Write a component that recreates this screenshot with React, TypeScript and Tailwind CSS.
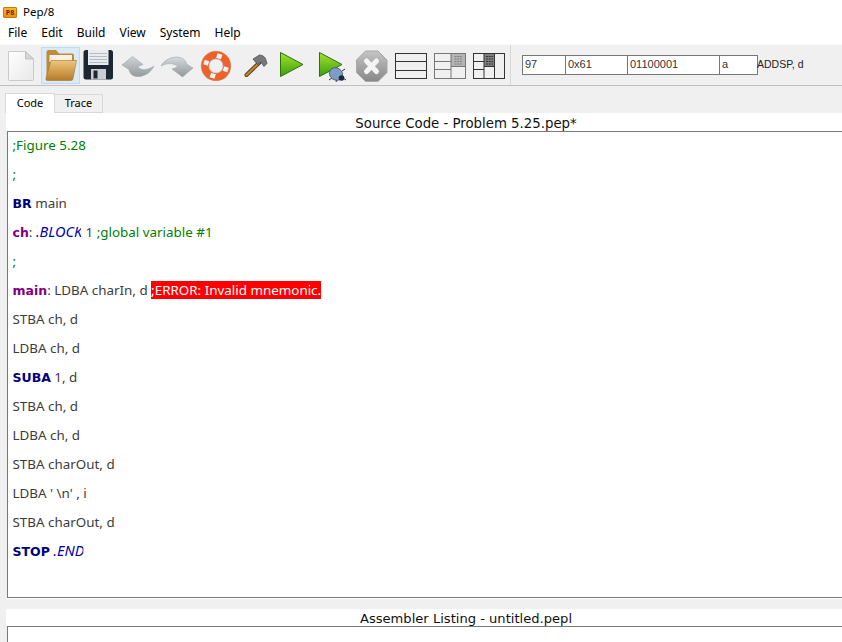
import type { ReactNode } from 'react';

const Icon = ({ children, active }: { children: ReactNode; active?: boolean }) => (
  <div className={`w-[39px] h-[37px] shrink-0 border ${active ? 'bg-[#d9ebf9] border-[#bcdcf4]' : 'border-transparent'}`}>
    <svg width="39" height="37" viewBox="0 0 39 37" className="-m-px block">
      {children}
    </svg>
  </div>
);

const NewIcon = () => (
  <Icon>
    <defs>
      <linearGradient id="newFill" x1="0" y1="0" x2="1" y2="1">
        <stop offset="0" stopColor="#ffffff" />
        <stop offset="1" stopColor="#e8e8e8" />
      </linearGradient>
    </defs>
    <path d="M6.500 4.500H23.500L31.500 12V32.500a1 1 0 0 1-1 1H7.500a1 1 0 0 1-1-1Z" fill="url(#newFill)" stroke="#cacaca" />
    <path d="M23.500 4.500V12H31.500Z" fill="#d6d6d6" stroke="#c2c2c2" />
  </Icon>
);

const OpenIcon = () => (
  <Icon active>
    <defs>
      <linearGradient id="folderFront" x1="0" y1="0" x2="0" y2="1">
        <stop offset="0" stopColor="#f0c67c" />
        <stop offset="1" stopColor="#b67a28" />
      </linearGradient>
    </defs>
    <path d="M5.500 33V5a2 2 0 0 1 2-2H15l3 3.500H31a2 2 0 0 1 2 2V14H11Z" fill="#c08a3a" />
    <path d="M8.500 8H31V15H8.500Z" fill="#f6f1e4" />
    <path d="M10 13.500H35.500L32 31.500a2 2 0 0 1-2 2H6.500a1.500 1.500 0 0 1-1.500-2Z" fill="url(#folderFront)" stroke="#a87426" strokeWidth="0.6" />
  </Icon>
);

const SaveIcon = () => (
  <Icon>
    <path d="M6 3H30.500a2.500 2.500 0 0 1 2.500 2.500V30a2.500 2.500 0 0 1-2.500 2.500H6A2.500 2.500 0 0 1 3.500 30V5.500A2.500 2.500 0 0 1 6 3Z" fill="#1d2733" />
    <rect x="8" y="3" width="20.500" height="15" fill="#e8ecf0" />
    <path d="M9.500 6.500H27M9.500 9.500H27M9.500 12.500H27M9.500 15.500H27" stroke="#b3bbc4" strokeWidth="1" />
    <rect x="11" y="22" width="15" height="10.500" fill="#c9ced3" />
    <rect x="13.500" y="23.500" width="4" height="8" fill="#1d2733" />
  </Icon>
);

const UndoIcon = () => (
  <Icon>
    <defs>
      <linearGradient id="undoFill" x1="0" y1="0" x2="0" y2="1">
        <stop offset="0" stopColor="#d0d5d6" />
        <stop offset="1" stopColor="#929b9e" />
      </linearGradient>
    </defs>
    <path d="M3 18 13.500 9.500 24 17.500 19 19.500C20.500 23 27 24.500 35 19 31.500 26.500 24 30 17.500 29.500 13 29 10.500 26 10 22.500Z" fill="url(#undoFill)" stroke="#a0a8aa" strokeWidth="0.6" />
  </Icon>
);

const RedoIcon = () => (
  <Icon>
    <defs>
      <linearGradient id="redoFill" x1="0" y1="0" x2="0" y2="1">
        <stop offset="0" stopColor="#d6dadb" />
        <stop offset="1" stopColor="#8f989b" />
      </linearGradient>
    </defs>
    <path d="M3 19C7 12 15 9 22 10.500 26 11.500 28 14 28.500 17L35 21 24.500 30 14 22 19.500 20C18 16.500 10 15 3 19Z" fill="url(#redoFill)" stroke="#a0a8aa" strokeWidth="0.6" />
  </Icon>
);

const HelpIcon = () => (
  <Icon>
    <circle cx="19" cy="19" r="11" fill="none" stroke="#c4c4c4" strokeWidth="8.500" />
    <circle cx="19" cy="19" r="11" fill="none" stroke="#ee6229" strokeWidth="7.500" />
    <g stroke="#eef1f3" strokeWidth="5">
      <path d="M23 7 21.500 11.500" />
      <path d="M31 23 26.500 21.500" />
      <path d="M15 31 16.500 26.500" />
      <path d="M7 15 11.500 16.500" />
    </g>
    <circle cx="19" cy="19" r="7" fill="#f0f0f0" stroke="#b9b9b9" strokeWidth="0.7" />
  </Icon>
);

const BuildIcon = () => (
  <Icon>
    <path d="M10.500 28 23.500 15.500" stroke="#5f3d10" strokeWidth="4" strokeLinecap="round" />
    <path d="M10.500 28 23.500 15.500" stroke="#c08a3c" strokeWidth="2" strokeLinecap="round" />
    <path d="M17 12 23.500 8C26 8 28.500 9.500 29.500 11.500L31 16.500 28 19.500 25 15 21.500 17.500Z" fill="#75797c" stroke="#3f4346" strokeWidth="0.7" strokeLinejoin="round" />
  </Icon>
);

const RunIcon = () => (
  <Icon>
    <defs>
      <linearGradient id="runFill" x1="0" y1="0" x2="0" y2="1">
        <stop offset="0" stopColor="#a6e22e" />
        <stop offset="1" stopColor="#36a00c" />
      </linearGradient>
    </defs>
    <path d="M5.500 5.500 28 17.500 5.500 29.500Z" fill="url(#runFill)" stroke="#2f6d10" strokeWidth="1" strokeLinejoin="round" />
  </Icon>
);

const DebugIcon = () => (
  <Icon>
    <defs>
      <linearGradient id="debugFill" x1="0" y1="0" x2="0" y2="1">
        <stop offset="0" stopColor="#a6e22e" />
        <stop offset="1" stopColor="#36a00c" />
      </linearGradient>
    </defs>
    <path d="M5.500 5.500 28 17.500 5.500 29.500Z" fill="url(#debugFill)" stroke="#2f6d10" strokeWidth="1" strokeLinejoin="round" />
    <g stroke="#26303c" strokeWidth="1">
      <path d="M15 33 18 31M28 24 31 22M29 31 32 33M22 35 23 33" />
    </g>
    <ellipse cx="22" cy="27" rx="7" ry="6" transform="rotate(35 22 27)" fill="#7d9cc8" stroke="#47566a" strokeWidth="0.8" />
    <circle cx="27.500" cy="31" r="2.800" fill="#1f2733" />
  </Icon>
);

const StopIcon = () => (
  <Icon>
    <defs>
      <linearGradient id="stopFill" x1="0" y1="0" x2="0" y2="1">
        <stop offset="0" stopColor="#c4c4c4" />
        <stop offset="1" stopColor="#888888" />
      </linearGradient>
    </defs>
    <path d="M12.500 4H25L34 13V25.500L25 34.500H12.500L3.500 25.500V13Z" fill="url(#stopFill)" stroke="#a8a8a8" strokeWidth="1" />
    <path d="M13.500 14 23.500 24.500M23.500 14 13.500 24.500" stroke="#f4f4f4" strokeWidth="5" strokeLinecap="round" />
  </Icon>
);

const LayoutOne = () => (
  <Icon>
    <g fill="none" stroke="#333333" strokeWidth="1">
      <rect x="3.500" y="6.500" width="31" height="25" />
      <path d="M3.500 14.500H34.500M3.500 23.500H34.500" />
    </g>
  </Icon>
);

const LayoutTwo = () => (
  <Icon>
    <rect x="20" y="6.500" width="14.500" height="13" fill="#b5b5b5" />
    <path d="M23.500 9.500H31M23.500 12H31M23.500 14.500H31M23.500 17H31" stroke="#7f7f7f" strokeWidth="1" strokeDasharray="2 0.700" />
    <g fill="none" stroke="#777777" strokeWidth="1">
      <rect x="3.500" y="6.500" width="31" height="25" />
      <path d="M3.500 14.500H20M3.500 22.500H20M20 6.500V31.500M20 19.500H34.500" />
    </g>
  </Icon>
);

const LayoutThree = () => (
  <Icon>
    <rect x="14" y="6.500" width="10.500" height="13" fill="#7f7f7f" />
    <path d="M16 9.500H23M16 12H23M16 14.500H23M16 17H23" stroke="#333333" strokeWidth="1" strokeDasharray="2 0.700" />
    <g fill="none" stroke="#333333" strokeWidth="1">
      <rect x="3.500" y="6.500" width="31" height="25" />
      <path d="M3.500 14.500H14M3.500 22.500H14M14 6.500V31.500M24.500 6.500V31.500M14 19.500H24.500" />
    </g>
  </Icon>
);

const Keyword = ({ children }: { children: ReactNode }) => (
  <b className="font-bold font-['DejaVu_Sans',sans-serif] text-[12.500px] text-[#000080]">{children}</b>
);
const Symbol = ({ children }: { children: ReactNode }) => (
  <b className="font-bold font-['DejaVu_Sans',sans-serif] text-[12.500px] text-[#800080]">{children}</b>
);
const Comment = ({ children }: { children: ReactNode }) => <span className="text-[#008000]">{children}</span>;
// italics are clipped at the right edge in the original
const Dot = ({ children }: { children: ReactNode }) => (
  <i className="inline-block italic text-[14.500px] leading-none text-[#0000a8] [clip-path:inset(0_1px_0_0)]">{children}</i>
);

const lines: ReactNode[] = [
  <Comment>;Figure 5.28</Comment>,
  <Comment>;</Comment>,
  <><Keyword>BR</Keyword> main</>,
  <><Symbol>ch</Symbol>: <Dot>.BLOCK</Dot> 1 <Comment>;global variable #1</Comment></>,
  <Comment>;</Comment>,
  <><Symbol>main</Symbol>: LDBA charIn, d <span className="bg-[#ff0000] text-white">;ERROR: Invalid mnemonic.</span></>,
  'STBA ch, d',
  'LDBA ch, d',
  <><Keyword>SUBA</Keyword> 1, d</>,
  'STBA ch, d',
  'LDBA ch, d',
  'STBA charOut, d',
  "LDBA ' \\n' , i",
  'STBA charOut, d',
  <><Keyword>STOP</Keyword> <Dot>.END</Dot></>,
];

const menus = ['File', 'Edit', 'Build', 'View', 'System', 'Help'];

const fields = [
  { value: '97', width: 'w-[44px]' },
  { value: '0x61', width: 'w-[63px]' },
  { value: '01100001', width: 'w-[93px]' },
  { value: 'a', width: 'w-[39px]' },
];

export default function App() {
  return (
    <div className="w-[842px] h-[642px] overflow-hidden flex flex-col bg-white text-black font-['Open_Sans',sans-serif] text-[12px]">
      <div className="h-[24px] shrink-0 flex items-center pl-[3px] gap-[6px]">
        <div className="w-[14px] h-[11px] rounded-[1px] bg-gradient-to-b from-[#ffb52e] to-[#f08a10] border border-[#c97a10] flex items-center justify-center text-[7px] leading-none font-bold text-[#5a2c00]">
          P8
        </div>
        <span className="font-['Noto_Sans',sans-serif] text-[11.500px]">Pep/8</span>
      </div>

      <div className="h-[20px] shrink-0 flex items-center pb-[2px] pl-[1px] font-['Noto_Sans',sans-serif]">
        {menus.map((m) => (
          <span key={m} className="px-[7px]">{m}</span>
        ))}
      </div>

      <div className="h-[42px] shrink-0 flex bg-[#f0f0f0] border-t border-t-[#fafafa] border-b border-b-[#c0c0c0]">
        <div className="w-[511px] shrink-0 flex items-center pl-[2px] border-r border-r-[#d8d8d8]">
          <NewIcon />
          <OpenIcon />
          <SaveIcon />
          <UndoIcon />
          <RedoIcon />
          <HelpIcon />
          <BuildIcon />
          <RunIcon />
          <DebugIcon />
          <StopIcon />
          <LayoutOne />
          <LayoutTwo />
          <LayoutThree />
        </div>
        <div className="flex items-center pl-[11px] pb-[1px] font-['Liberation_Sans',sans-serif] text-[11px]">
          {fields.map((f) => (
            <div key={f.value} className={`${f.width} h-[20px] -mr-px bg-white border border-[#767676] flex items-center pl-[2px] text-[#333333]`}>
              {f.value}
            </div>
          ))}
          <span className="text-[10.500px] text-[#222222]">ADDSP, d</span>
        </div>
      </div>

      <div className="flex-1 min-h-0 flex flex-col bg-[#f0f0f0] pl-[6px]">
        <div className="h-[27px] shrink-0 flex items-end font-['Noto_Sans',sans-serif] text-[11px]">
          <div className="h-[20px] w-[50px] -ml-px bg-white border border-[#d9d9d9] border-b-0 flex items-center justify-center">Code</div>
          <div className="h-[19px] w-[48px] bg-[#f0f0f0] border border-[#d9d9d9] border-l-0 flex items-center justify-center">Trace</div>
        </div>

        <div className="h-[18px] shrink-0 bg-white flex items-center justify-center pl-[84px] pt-[4px] font-['DejaVu_Sans',sans-serif] text-[13.300px] text-[#111111]">
          Source Code - Problem 5.25.pep*
        </div>
        <div className="h-[467px] shrink-0 ml-px bg-white border border-[#7a7a7a] border-r-0 pt-[2px] pl-[4.500px] font-['Noto_Sans',sans-serif] text-[13.400px] text-[#3c3c3c]">
          {lines.map((line, i) => (
            <div key={i} className="h-[29px] leading-[22px] whitespace-pre">{line}</div>
          ))}
        </div>
        <div className="h-px shrink-0 bg-white" />
        <div className="h-[10px] shrink-0" />
        <div className="h-[17px] shrink-0 bg-white flex items-center justify-center pl-[84px] pt-[2px] font-['DejaVu_Sans',sans-serif] text-[13.100px] text-[#111111]">
          Assembler Listing - untitled.pepl
        </div>
        <div className="flex-1 ml-px bg-white border-t border-l border-[#7a7a7a]" />
      </div>
    </div>
  );
}
